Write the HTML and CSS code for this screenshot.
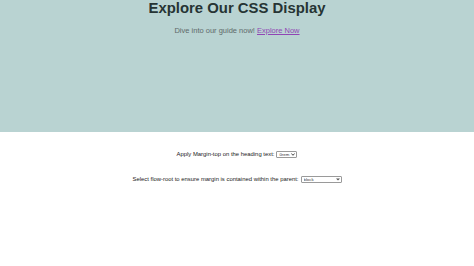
FILE: index.html
```html
<!DOCTYPE html>
<html>
<head>
<meta charset="utf-8">
<link rel="stylesheet" href="styles.css">
</head>
<body>
<section class="hero">
  <h1 class="title">Explore Our CSS Display</h1>
  <p class="sub">Dive into our guide now! <a href="#" class="link">Explore Now</a></p>
</section>
<div class="controls">
  <div class="row">
    <label class="lbl">Apply Margin-top on the heading text:</label>
    <span class="selwrap sel-small">
      <select class="sel"><option>0rem</option></select>
      <svg class="arrow arrow-v" viewBox="0 0 4 3" width="4" height="3"><path d="M0.4 0.5 L2 2.3 L3.6 0.5" fill="none" stroke="#333" stroke-width="0.9"/></svg>
    </span>
  </div>
  <div class="row">
    <label class="lbl">Select flow-root to ensure margin is contained within the parent:</label>
    <span class="selwrap sel-wide">
      <select class="sel"><option>block</option></select>
      <svg class="arrow arrow-t" viewBox="0 0 4 3" width="4" height="3"><path d="M0 0.4 L4 0.4 L2 2.6 Z" fill="#555"/></svg>
    </span>
  </div>
</div>
</body>
</html>
```
FILE: styles.css
```css
html, body {
  margin: 0;
  padding: 0;
  background: #ffffff;
  font-family: "Liberation Sans", Arial, sans-serif;
}
.hero {
  background: #b9d3d2;
  height: 132px;
  text-align: center;
  display: flow-root;
}
.title {
  margin: 0;
  font-size: 14.9px;
  line-height: 17px;
  font-weight: bold;
  color: #263434;
}
.sub {
  margin: 9px 0 0;
  font-size: 7.5px;
  line-height: 10px;
  color: #606a6a;
}
.link {
  color: #9045b4;
  text-decoration: underline;
}
.controls {
  display: flex;
  flex-direction: column;
  align-items: center;
  padding-top: 19px;
  gap: 18px;
}
.row {
  display: flex;
  align-items: center;
  gap: 2px;
}
.lbl {
  font-size: 5.9px;
  line-height: 7px;
  color: #222;
}
.selwrap {
  position: relative;
  display: inline-flex;
  height: 7px;
}
.sel {
  -webkit-appearance: none;
  appearance: none;
  width: 100%;
  font-family: "Liberation Sans", Arial, sans-serif;
  font-size: 4.3px;
  line-height: 5px;
  height: 7px;
  padding: 0 0 0 2px;
  margin: 0;
  border: 1px solid #9a9a9a;
  border-radius: 1px;
  background: #fff;
  color: #333;
}
.sel-small { width: 21px; }
.sel-wide { width: 41px; }
.arrow {
  position: absolute;
  top: 2px;
  right: 2px;
  pointer-events: none;
}
```
